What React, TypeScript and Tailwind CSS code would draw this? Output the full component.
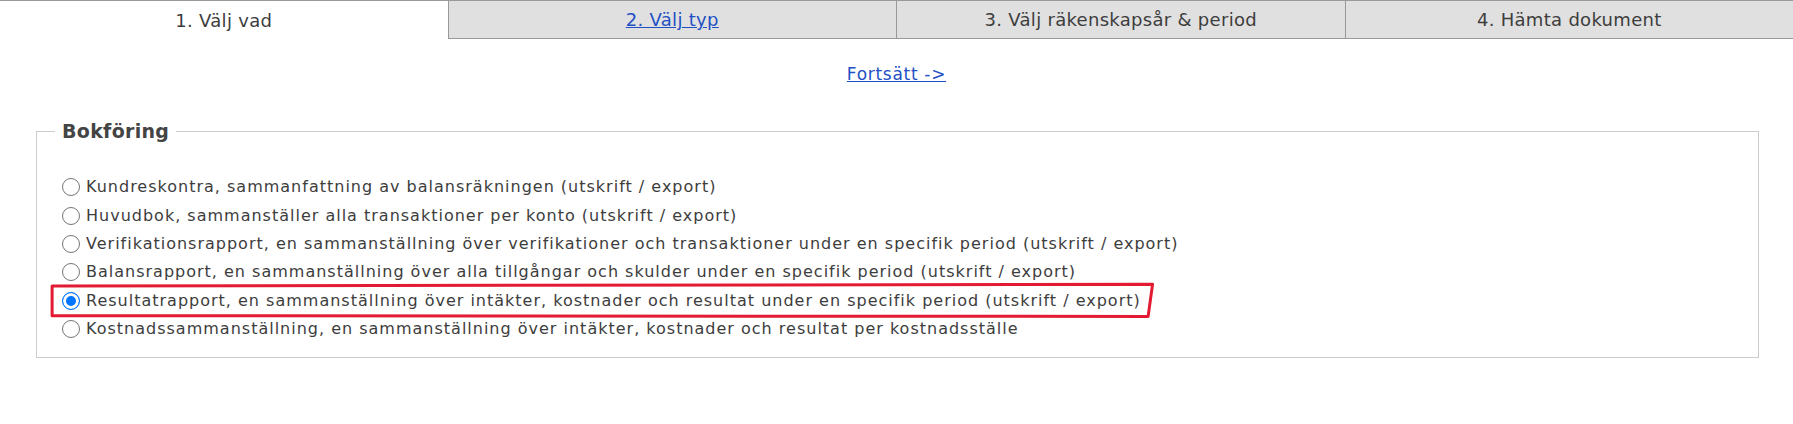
import React, { useState } from 'react';

const tabs = [
  { label: '1. Välj vad', active: true },
  { label: '2. Välj typ', link: true },
  { label: '3. Välj räkenskapsår & period' },
  { label: '4. Hämta dokument' },
];

const options = [
  'Kundreskontra, sammanfattning av balansräkningen (utskrift / export)',
  'Huvudbok, sammanställer alla transaktioner per konto (utskrift / export)',
  'Verifikationsrapport, en sammanställning över verifikationer och transaktioner under en specifik period (utskrift / export)',
  'Balansrapport, en sammanställning över alla tillgångar och skulder under en specifik period (utskrift / export)',
  'Resultatrapport, en sammanställning över intäkter, kostnader och resultat under en specifik period (utskrift / export)',
  'Kostnadssammanställning, en sammanställning över intäkter, kostnader och resultat per kostnadsställe',
];

const App: React.FC = () => {
  const [selected, setSelected] = useState(4);

  return (
    <div className="w-[1793px] h-[424px] bg-white text-[#3d3d3d] font-['DejaVu_Sans','Verdana',sans-serif]">
      {/* Steps */}
      <div className="flex border-t border-[#999]">
        {tabs.map((t, i) => (
          <div
            key={i}
            className={
              'flex-1 h-[38px] flex items-center justify-center text-[18px] tracking-[0.3px] ' +
              (t.active
                ? 'bg-white'
                : 'bg-[#e0e0e0] border-b border-[#999] border-l')
            }
          >
            {t.link ? (
              <a href="#" className="text-[#2250c4] underline">
                {t.label}
              </a>
            ) : (
              <span>{t.label}</span>
            )}
          </div>
        ))}
      </div>

      <div className="flex justify-center pt-[23px]">
        <a href="#" className="text-[#2250c4] underline text-[17px] tracking-[0.7px] leading-[24px]">
          Fortsätt -&gt;
        </a>
      </div>

      <fieldset className="ml-[36px] mr-[34px] mt-[34px] border border-[#ccc] pl-[18px] pr-4 pt-[31px] pb-[14px]">
        <legend className="px-[7px] text-[19px] tracking-[0.3px] font-bold leading-[22px] text-[#444]">Bokföring</legend>
        <div className="flex flex-col">
          {options.map((o, i) => (
            <label key={i} className="relative self-start flex items-center h-[28.4px] text-[16px] tracking-[1px] cursor-pointer">
              <input
                type="radio"
                name="report"
                checked={selected === i}
                onChange={() => setSelected(i)}
                className="appearance-none ml-[7px] mr-[6px] w-[18px] h-[18px] rounded-full border border-[#767676] bg-white checked:bg-[#0075ff] checked:border-[#0075ff] checked:shadow-[inset_0_0_0_3px_white] shrink-0"
              />
              <span>{o}</span>
              {i === 4 && (
                <svg
                  className="absolute -left-[4px] -top-[3px] w-[calc(100%+18px)] h-[calc(100%+5px)] pointer-events-none overflow-visible"
                  viewBox="0 0 100 100"
                  preserveAspectRatio="none"
                >
                  <polygon
                    points="0.1,6 99.8,1 99.4,97 0.1,95"
                    fill="none"
                    stroke="#e31b32"
                    strokeWidth="3"
                    vectorEffect="non-scaling-stroke"
                    strokeLinejoin="round"
                  />
                </svg>
              )}
            </label>
          ))}
        </div>
      </fieldset>
    </div>
  );
};

export default App;
